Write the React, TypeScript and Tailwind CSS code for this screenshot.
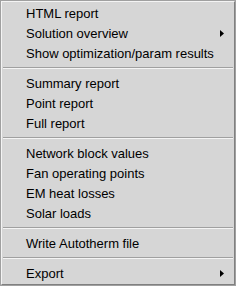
const groups: { label: string; sub?: boolean }[][] = [
  [{ label: 'HTML report' }, { label: 'Solution overview', sub: true }, { label: 'Show optimization/param results' }],
  [{ label: 'Summary report' }, { label: 'Point report' }, { label: 'Full report' }],
  [{ label: 'Network block values' }, { label: 'Fan operating points' }, { label: 'EM heat losses' }, { label: 'Solar loads' }],
  [{ label: 'Write Autotherm file' }],
  [{ label: 'Export', sub: true }],
];

const Arrow = () => (
  <svg width="4" height="7" viewBox="0 0 4 7" className="absolute right-[10px] top-[7px]">
    <path d="M0 0 L4 3.5 L0 7 Z" fill="#000" />
  </svg>
);

const App = () => {
  return (
    <div className="w-[236px] h-[286px] bg-[#a0a0a0] p-px" style={{ fontFamily: '"Liberation Sans", Arial, sans-serif' }}>
      <div className="h-full border-t border-l border-t-[#f4f4f4] border-l-[#f4f4f4] border-r border-b border-r-[#808080] border-b-[#808080] bg-[#d6d6d6] py-[1px]">
        {groups.map((g, gi) => (
          <div key={gi}>
            {gi > 0 && (
              <div className="h-[10px] flex flex-col justify-center px-[1px]">
                <div className="h-px bg-[#a0a0a0]" />
                <div className="h-px bg-[#f4f4f4]" />
              </div>
            )}
            {g.map((it) => (
              <div key={it.label} className="relative h-[20px] flex items-center pl-[24px] text-[13px] text-black leading-none">
                {it.label}
                {it.sub && <Arrow />}
              </div>
            ))}
          </div>
        ))}
      </div>
    </div>
  );
};

export default App;
